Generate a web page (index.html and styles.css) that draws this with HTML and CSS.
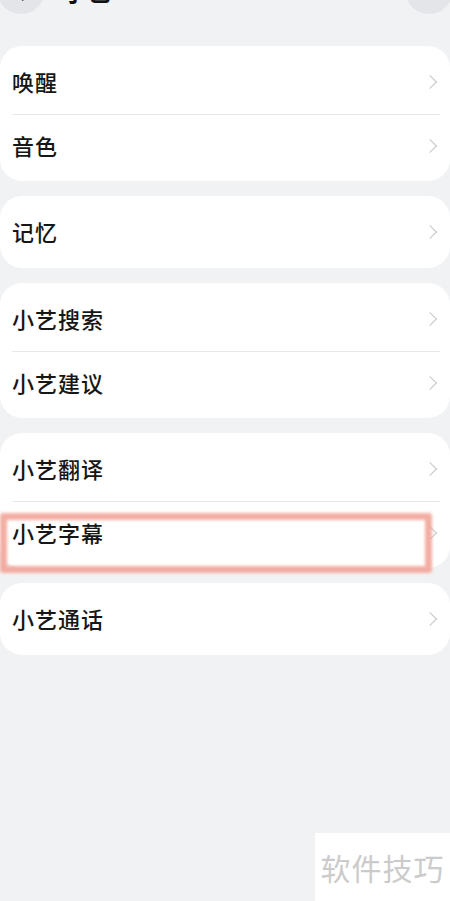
FILE: index.html
```html
<!DOCTYPE html>
<html lang="zh-CN">
<head>
  <meta charset="UTF-8">
  <meta name="viewport" content="width=device-width, initial-scale=1.0">
  <title>小艺</title>
  <link rel="stylesheet" href="styles.css">
</head>
<body>
  <div class="page">
    <header class="topbar">
      <span class="round-btn"><span class="back-arrow">‹</span></span>
      <span class="title">小艺</span>
      <span class="round-btn"></span>
    </header>

    <main class="groups">
      <section class="card">
        <div class="row"><span>唤醒</span><i class="chev"></i></div>
        <div class="row"><span>音色</span><i class="chev"></i></div>
      </section>
      <section class="card">
        <div class="row"><span>记忆</span><i class="chev"></i></div>
      </section>
      <section class="card">
        <div class="row"><span>小艺搜索</span><i class="chev"></i></div>
        <div class="row"><span>小艺建议</span><i class="chev"></i></div>
      </section>
      <section class="card">
        <div class="row"><span>小艺翻译</span><i class="chev"></i></div>
        <div class="row marked"><span>小艺字幕</span><i class="chev"></i><b class="mark"></b></div>
      </section>
      <section class="card">
        <div class="row"><span>小艺通话</span><i class="chev"></i></div>
      </section>
    </main>

    <div class="watermark">软件技巧</div>
  </div>
</body>
</html>
```

FILE: styles.css
```css
html, body {
  margin: 0;
  background: #f1f2f4;
}
body {
  font-family: "Noto Sans CJK SC", "Noto Sans", sans-serif;
  color: #161616;
}
.page {
  position: relative;
  width: 450px;
  height: 901px;
  overflow: hidden;
}
.topbar {
  display: flex;
  align-items: center;
  height: 48px;
  margin-top: -34px;
}
.round-btn {
  width: 48px;
  height: 48px;
  border-radius: 50%;
  background: #e4e5e8;
  flex: none;
  display: flex;
  align-items: center;
  justify-content: center;
}
.topbar .round-btn:first-child {
  margin-left: -3px;
}
.topbar .round-btn:last-child {
  margin-right: -3px;
}
.back-arrow {
  font-size: 30px;
  line-height: 1;
  color: #222;
}
.title {
  flex: 1;
  margin-left: 18px;
  font-size: 24px;
  font-weight: 700;
  color: #111;
}
.groups {
  display: flex;
  flex-direction: column;
  gap: 15px;
  margin-top: 32px;
}
.card {
  background: #fff;
  border-radius: 22px;
  padding: 4px 0;
}
.row {
  position: relative;
  display: flex;
  align-items: center;
  justify-content: space-between;
  height: 64px;
  padding: 0 15px 0 12px;
  font-size: 22px;
  font-weight: 500;
  letter-spacing: 1px;
}
.row span {
  margin-bottom: 3px;
}
.row + .row {
  height: 62px;
  border-top: 1px solid #e8e8ea;
  margin-left: 12px;
  margin-right: 10px;
  padding-left: 0;
  padding-right: 5px;
}
.chev {
  width: 9px;
  height: 9px;
  border-top: 1.5px solid #c6c6c8;
  border-right: 1.5px solid #c6c6c8;
  transform: rotate(45deg);
}
.mark {
  position: absolute;
  left: -12px;
  top: 11px;
  width: 418px;
  height: 46px;
  border: 7px solid #f2a093;
  border-radius: 3px;
  filter: blur(1.5px);
  opacity: 0.85;
}
.watermark {
  position: absolute;
  right: 0;
  bottom: 0;
  width: 135px;
  height: 68px;
  background: #fff;
  color: #cbcbcb;
  font-size: 30px;
  line-height: 68px;
  text-align: center;
  letter-spacing: 1px;
}
```
